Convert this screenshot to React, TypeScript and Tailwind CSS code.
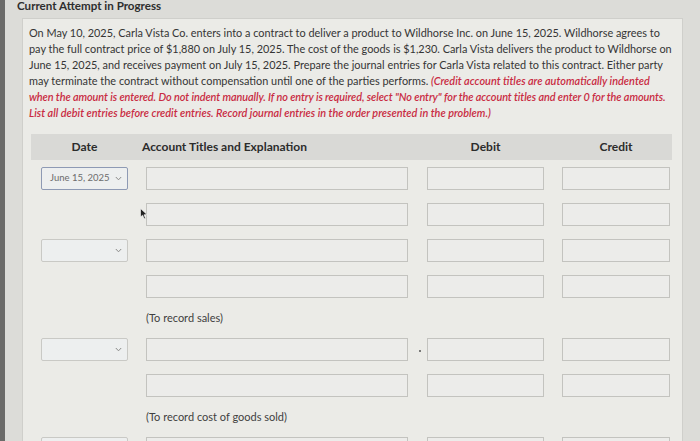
import React from 'react';

const Chevron = () => (
  <svg width="7" height="5" viewBox="0 0 7 5" className="shrink-0">
    <path d="M0.8 1 L3.5 3.8 L6.2 1" fill="none" stroke="#8a8a88" strokeWidth="1" />
  </svg>
);

const DateSelect = ({ value, active }: { value?: string; active?: boolean }) => (
  <div
    className={`flex h-[23px] w-[87px] items-center justify-between rounded-[2px] border bg-[#edefef] pl-[8px] pr-[5px] ${
      active ? 'border-[#8e9ab4]' : 'border-[#c9c9c5]'
    }`}
  >
    <span className="whitespace-nowrap text-[9.5px] text-[#6c6c6c]">{value}</span>
    <Chevron />
  </div>
);

const Field = ({ w }: { w: string }) => (
  <div className={`h-[23px] ${w} border border-[#c3c3bf] bg-[#ececea]`} />
);

const Row = ({ date, active, first }: { date?: boolean; active?: boolean; first?: boolean }) => (
  <div className="flex h-[23px] items-center">
    <div className="w-[98px] pl-[10px]">
      {date && <DateSelect value={first ? 'June 15, 2025' : undefined} active={active} />}
    </div>
    <div className="ml-[17px]">
      <Field w="w-[262px]" />
    </div>
    <div className="ml-[19px]">
      <Field w="w-[117px]" />
    </div>
    <div className="ml-[18px]">
      <Field w="w-[108px]" />
    </div>
  </div>
);

const Note = ({ children }: { children: React.ReactNode }) => (
  <div className="flex h-[14px] items-center pl-[115px] text-[11px] text-[#3f3f3f]">{children}</div>
);

export default function App() {
  return (
    <div
      className="relative h-[441px] w-[700px] overflow-hidden bg-[#dcdcd8] text-[#333]"
      style={{ fontFamily: 'Lato, "Open Sans", sans-serif' }}
    >
      <div className="flex h-full">
        <div className="w-[5px] shrink-0 bg-[#6b6b69]" />
        <div className="flex flex-1 flex-col">
          <div className="h-[18px] shrink-0 pl-[12px] text-[11.6px] font-bold leading-[12px] text-[#2e2e2e]">
            Current Attempt in Progress
          </div>
          <div className="ml-[17px] mr-[17px] flex-1 border-l border-t border-r border-[#cfcfcb] bg-[#ebebe7] pt-[6px]">
            <div className="pl-[6px] text-[10.9px] leading-[16px] text-[#353535] whitespace-nowrap">
              <div>On May 10, 2025, Carla Vista Co. enters into a contract to deliver a product to Wildhorse Inc. on June 15, 2025. Wildhorse agrees to</div>
              <div>pay the full contract price of $1,880 on July 15, 2025. The cost of the goods is $1,230. Carla Vista delivers the product to Wildhorse on</div>
              <div>June 15, 2025, and receives payment on July 15, 2025. Prepare the journal entries for Carla Vista related to this contract. Either party</div>
              <div>
                may terminate the contract without compensation until one of the parties performs.{' '}
                <span className="font-semibold italic text-[#c92b43]">(Credit account titles are automatically indented</span>
              </div>
              <div className="font-semibold italic tracking-[-0.09px] text-[#c92b43]">
                when the amount is entered. Do not indent manually. If no entry is required, select "No entry" for the account titles and enter 0 for the amounts.
              </div>
              <div className="font-semibold italic text-[#c92b43]">
                List all debit entries before credit entries. Record journal entries in the order presented in the problem.)
              </div>
            </div>

            <div className="ml-[8px] mt-[13px] w-[641px]">
              <div className="flex h-[26px] items-center bg-[#d9d9d6] text-[12px] font-bold text-[#2c2c2c]">
                <div className="w-[107px] shrink-0 text-center">Date</div>
                <div className="ml-[4px] w-[266px] shrink-0 whitespace-nowrap">Account Titles and Explanation</div>
                <div className="ml-[19px] w-[117px] shrink-0 text-center">Debit</div>
                <div className="ml-[18px] w-[108px] shrink-0 text-center">Credit</div>
              </div>
              <div className="mt-[7px] flex flex-col gap-[13px]">
                <Row date active first />
                <Row />
                <Row date />
                <Row />
                <Note>(To record sales)</Note>
                <Row date />
                <Row />
                <Note>(To record cost of goods sold)</Note>
                <Row date />
              </div>
            </div>
          </div>
        </div>
      </div>

      {/* mouse pointer */}
      <svg className="absolute left-[140px] top-[208px]" width="8" height="12" viewBox="0 0 8 12">
        <path d="M0.5 0.5 L0.5 9 L2.6 7.2 L4.2 10.8 L5.5 10.2 L4 6.8 L7 6.6 Z" fill="#222" stroke="#fff" strokeWidth="0.6" />
      </svg>
      <div className="absolute left-[419px] top-[350px] h-[2px] w-[2px] rounded-full bg-[#555]" />
    </div>
  );
}
